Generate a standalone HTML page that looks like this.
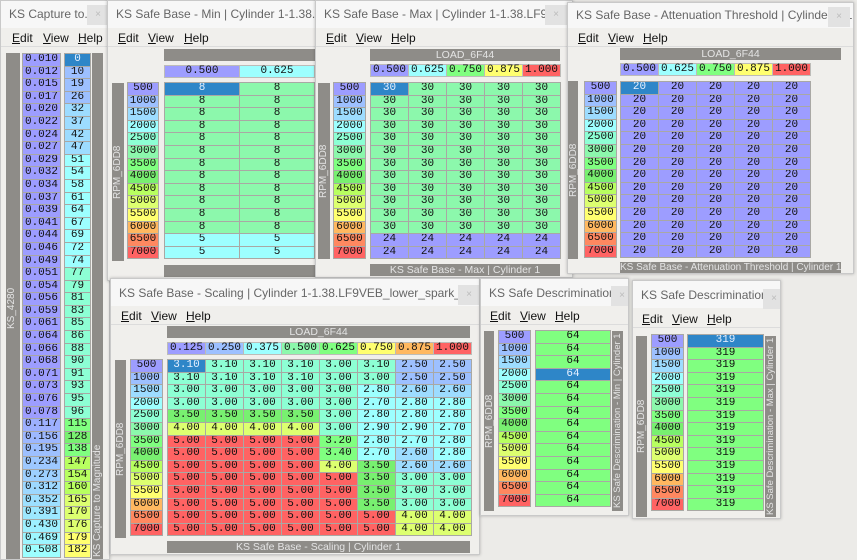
<!DOCTYPE html>
<html><head><meta charset="utf-8"><style>
*{box-sizing:border-box;margin:0;padding:0}
body{width:857px;height:556px;background:#ecebe8;position:relative;overflow:hidden;font-family:"Liberation Sans",sans-serif}
.w{position:absolute;background:#f0efec;border:1px solid #c9c9c9;overflow:hidden;box-shadow:0 0 3px rgba(0,0,0,.25)}
.t{position:absolute;left:0;top:0;right:0;height:27px;background:#f7f7f7;color:#666;font-size:12px;line-height:27px;padding-left:8px;white-space:nowrap;overflow:hidden}
.x{position:absolute;top:4px;width:22px;height:20px;background:#e2e2e2;color:#bbb;font-size:10px;text-align:center;line-height:20px}
.m{position:absolute;left:0;right:0;top:27px;height:19px;background:#f0efec;font-size:12px;color:#111;border-bottom:1px solid #dcdcdc}
.m span{position:absolute;top:3px}
.m u{text-decoration:underline}
.bar{position:absolute;height:12px;background:#8e8c88;color:#e4e4e4;font-size:10.5px;line-height:12px;text-align:center;white-space:nowrap;overflow:hidden}
.vs{position:absolute;background:#8e8c88;color:#e4e4e4;font-size:10px;writing-mode:vertical-rl;transform:rotate(180deg);text-align:center;white-space:nowrap;overflow:hidden}
.g{position:absolute;display:grid;gap:1px;background:#a9a8a4;border:1px solid #a9a8a4;font-family:"Liberation Mono",monospace;font-size:11px;color:#111}
.g div{height:11.6px;line-height:11.6px;text-align:center;overflow:hidden}
.P{background:#9d9dff}.B{background:#9dc0ff}.L{background:#9ddcff}.C{background:#9dffff}.A{background:#8dffd4}.Q{background:#8cf8ac}.G{background:#80ff80}.H{background:#78f070}.V{background:#b8ff60}.W{background:#ddff70}.Y{background:#ffff70}.O{background:#ffb860}.N{background:#ff8860}.R{background:#ff6363}.S{background:#2e86c8;color:#e6f0ff}
.ax{position:absolute;display:grid;gap:1px;font-family:"Liberation Mono",monospace;font-size:11px;color:#111;background:#bdbcb8;border:1px solid #bdbcb8}
.ax div{height:11px;line-height:11px;text-align:center}
</style></head><body>

<!-- Window 1 -->
<div class="w" style="left:0;top:0;width:110px;height:560px">
<div class="t">KS Capture to...</div><div class="x" style="left:86px">×</div>
<div class="m"><span style="left:11px"><u>E</u>dit</span><span style="left:42px"><u>V</u>iew</span><span style="left:77px"><u>H</u>elp</span></div>
<div class="vs" style="left:5px;top:52px;width:14px;height:510px">KS_4280</div>
<div class="g" style="left:21px;top:52px;grid-template-columns:37px">
<div class="P">0.010</div><div class="P">0.012</div><div class="P">0.015</div><div class="P">0.017</div><div class="P">0.020</div><div class="P">0.022</div><div class="P">0.024</div><div class="P">0.027</div><div class="P">0.029</div><div class="P">0.032</div><div class="P">0.034</div><div class="P">0.037</div><div class="P">0.039</div><div class="P">0.041</div><div class="P">0.044</div><div class="P">0.046</div><div class="P">0.049</div><div class="P">0.051</div><div class="P">0.054</div><div class="P">0.056</div><div class="P">0.059</div><div class="P">0.061</div><div class="P">0.064</div><div class="P">0.066</div><div class="P">0.068</div><div class="P">0.071</div><div class="P">0.073</div><div class="P">0.076</div><div class="P">0.078</div><div style="background:#9db0ff">0.117</div><div style="background:#9db8ff">0.156</div><div style="background:#9dc0ff">0.195</div><div style="background:#9dc8ff">0.234</div><div style="background:#9dd0ff">0.273</div><div style="background:#9dd8ff">0.312</div><div style="background:#9de0ff">0.352</div><div style="background:#9de8ff">0.391</div><div style="background:#9df0ff">0.430</div><div style="background:#9df6ff">0.469</div><div class="C">0.508</div>
</div>
<div class="g" style="left:63px;top:52px;grid-template-columns:25px">
<div class="S">0</div><div class="B">10</div><div class="B">19</div><div class="B">26</div><div class="L">32</div><div class="L">37</div><div class="L">42</div><div class="L">47</div><div class="C">51</div><div class="C">54</div><div class="C">58</div><div class="C">61</div><div class="C">64</div><div class="C">67</div><div class="C">69</div><div class="C">72</div><div class="C">74</div><div class="A">77</div><div class="A">79</div><div class="A">81</div><div class="A">83</div><div class="A">85</div><div class="A">86</div><div class="A">88</div><div class="A">90</div><div class="A">91</div><div class="A">93</div><div class="A">95</div><div class="A">96</div><div class="G">115</div><div class="H">128</div><div class="G">138</div><div class="V">147</div><div class="V">154</div><div class="V">160</div><div class="W">165</div><div class="W">170</div><div class="W">176</div><div class="Y">179</div><div class="Y">182</div>
</div>
<div class="vs" style="left:91px;top:52px;width:11px;height:510px;text-align:left;padding-top:6px">KS Capture to Magnitude</div>
</div>

<!-- Window 2 Min -->
<div class="w" style="left:107px;top:0;width:216px;height:281px">
<div class="t">KS Safe Base - Min | Cylinder 1-1.38.LF9VEB_lower</div>
<div class="m"><span style="left:10px"><u>E</u>dit</span><span style="left:40px"><u>V</u>iew</span><span style="left:76px"><u>H</u>elp</span></div>
<div class="bar" style="left:56px;top:48px;width:200px"></div>
<div class="ax" style="left:56px;top:64px;grid-template-columns:74px 74px"><div class="P">0.500</div><div class="C">0.625</div></div>
<div class="vs" style="left:4px;top:82px;width:12px;height:178px">RPM_6DD8</div>
<div class="g" style="left:19px;top:81px;grid-template-columns:30px">
<div class="P">500</div><div class="B">1000</div><div class="L">1500</div><div class="C">2000</div><div class="A">2500</div><div class="Q">3000</div><div class="G">3500</div><div class="H">4000</div><div class="V">4500</div><div class="W">5000</div><div class="Y">5500</div><div class="O">6000</div><div class="N">6500</div><div class="R">7000</div></div>
<div class="g" style="left:56px;top:81px;grid-template-columns:74px 74px">
<div class="S">8</div><div class="Q">8</div><div class="Q">8</div><div class="Q">8</div><div class="Q">8</div><div class="Q">8</div><div class="Q">8</div><div class="Q">8</div><div class="Q">8</div><div class="Q">8</div><div class="Q">8</div><div class="Q">8</div><div class="Q">8</div><div class="Q">8</div><div class="Q">8</div><div class="Q">8</div><div class="Q">8</div><div class="Q">8</div><div class="Q">8</div><div class="Q">8</div><div class="Q">8</div><div class="Q">8</div><div class="Q">8</div><div class="Q">8</div><div class="C">5</div><div class="C">5</div><div class="C">5</div><div class="C">5</div></div>
<div class="bar" style="left:56px;top:264px;width:200px;text-align:right">KS Safe</div>
</div>

<!-- Window 3 Max -->
<div class="w" style="left:315px;top:0;width:258px;height:278px">
<div class="t">KS Safe Base - Max | Cylinder 1-1.38.LF9VEB_l...</div><div class="x" style="left:229px">×</div>
<div class="m"><span style="left:10px"><u>E</u>dit</span><span style="left:40px"><u>V</u>iew</span><span style="left:75px"><u>H</u>elp</span></div>
<div class="bar" style="left:54px;top:48px;width:190px">LOAD_6F44</div>
<div class="ax" style="left:54px;top:63px;grid-template-columns:37px 37px 37px 37px 37px"><div class="P">0.500</div><div class="C">0.625</div><div class="G">0.750</div><div class="Y">0.875</div><div class="R">1.000</div></div>
<div class="vs" style="left:2px;top:82px;width:12px;height:176px">RPM_6DD8</div>
<div class="g" style="left:17px;top:81px;grid-template-columns:31px">
<div class="P">500</div><div class="B">1000</div><div class="L">1500</div><div class="C">2000</div><div class="A">2500</div><div class="Q">3000</div><div class="G">3500</div><div class="H">4000</div><div class="V">4500</div><div class="W">5000</div><div class="Y">5500</div><div class="O">6000</div><div class="N">6500</div><div class="R">7000</div></div>
<div class="g" style="left:54px;top:81px;grid-template-columns:37px 37px 37px 37px 37px">
<div class="S">30</div><div class="Q">30</div><div class="Q">30</div><div class="Q">30</div><div class="Q">30</div>
<div class="Q">30</div><div class="Q">30</div><div class="Q">30</div><div class="Q">30</div><div class="Q">30</div>
<div class="Q">30</div><div class="Q">30</div><div class="Q">30</div><div class="Q">30</div><div class="Q">30</div>
<div class="Q">30</div><div class="Q">30</div><div class="Q">30</div><div class="Q">30</div><div class="Q">30</div>
<div class="Q">30</div><div class="Q">30</div><div class="Q">30</div><div class="Q">30</div><div class="Q">30</div>
<div class="Q">30</div><div class="Q">30</div><div class="Q">30</div><div class="Q">30</div><div class="Q">30</div>
<div class="Q">30</div><div class="Q">30</div><div class="Q">30</div><div class="Q">30</div><div class="Q">30</div>
<div class="Q">30</div><div class="Q">30</div><div class="Q">30</div><div class="Q">30</div><div class="Q">30</div>
<div class="Q">30</div><div class="Q">30</div><div class="Q">30</div><div class="Q">30</div><div class="Q">30</div>
<div class="Q">30</div><div class="Q">30</div><div class="Q">30</div><div class="Q">30</div><div class="Q">30</div>
<div class="Q">30</div><div class="Q">30</div><div class="Q">30</div><div class="Q">30</div><div class="Q">30</div>
<div class="Q">30</div><div class="Q">30</div><div class="Q">30</div><div class="Q">30</div><div class="Q">30</div>
<div class="P">24</div><div class="P">24</div><div class="P">24</div><div class="P">24</div><div class="P">24</div>
<div class="P">24</div><div class="P">24</div><div class="P">24</div><div class="P">24</div><div class="P">24</div></div>
<div class="bar" style="left:54px;top:263px;width:190px">KS Safe Base - Max | Cylinder 1</div>
</div>

<!-- Window 4 Attenuation -->
<div class="w" style="left:567px;top:2px;width:287px;height:272px">
<div class="t" style="height:25px;line-height:25px">KS Safe Base - Attenuation Threshold | Cylinder 1-1....</div><div class="x" style="left:260px">×</div>
<div class="m" style="top:25px"><span style="left:10px"><u>E</u>dit</span><span style="left:40px"><u>V</u>iew</span><span style="left:75px"><u>H</u>elp</span></div>
<div class="bar" style="left:52px;top:45px;width:221px">LOAD_6F44</div>
<div class="ax" style="left:52px;top:60px;grid-template-columns:37px 37px 37px 37px 37px"><div class="P">0.500</div><div class="C">0.625</div><div class="G">0.750</div><div class="Y">0.875</div><div class="R">1.000</div></div>
<div class="vs" style="left:0;top:78px;width:10px;height:178px">RPM_6DD8</div>
<div class="g" style="left:16px;top:78px;grid-template-columns:31px">
<div class="P">500</div><div class="B">1000</div><div class="L">1500</div><div class="C">2000</div><div class="A">2500</div><div class="Q">3000</div><div class="G">3500</div><div class="H">4000</div><div class="V">4500</div><div class="W">5000</div><div class="Y">5500</div><div class="O">6000</div><div class="N">6500</div><div class="R">7000</div></div>
<div class="g" style="left:52px;top:78px;grid-template-columns:37px 37px 37px 37px 37px">
<div class="S">20</div><div class="P">20</div><div class="P">20</div><div class="P">20</div><div class="P">20</div>
<div class="P">20</div><div class="P">20</div><div class="P">20</div><div class="P">20</div><div class="P">20</div>
<div class="P">20</div><div class="P">20</div><div class="P">20</div><div class="P">20</div><div class="P">20</div>
<div class="P">20</div><div class="P">20</div><div class="P">20</div><div class="P">20</div><div class="P">20</div>
<div class="P">20</div><div class="P">20</div><div class="P">20</div><div class="P">20</div><div class="P">20</div>
<div class="P">20</div><div class="P">20</div><div class="P">20</div><div class="P">20</div><div class="P">20</div>
<div class="P">20</div><div class="P">20</div><div class="P">20</div><div class="P">20</div><div class="P">20</div>
<div class="P">20</div><div class="P">20</div><div class="P">20</div><div class="P">20</div><div class="P">20</div>
<div class="P">20</div><div class="P">20</div><div class="P">20</div><div class="P">20</div><div class="P">20</div>
<div class="P">20</div><div class="P">20</div><div class="P">20</div><div class="P">20</div><div class="P">20</div>
<div class="P">20</div><div class="P">20</div><div class="P">20</div><div class="P">20</div><div class="P">20</div>
<div class="P">20</div><div class="P">20</div><div class="P">20</div><div class="P">20</div><div class="P">20</div>
<div class="P">20</div><div class="P">20</div><div class="P">20</div><div class="P">20</div><div class="P">20</div>
<div class="P">20</div><div class="P">20</div><div class="P">20</div><div class="P">20</div><div class="P">20</div></div>
<div class="bar" style="left:52px;top:259px;width:221px;font-size:10px">KS Safe Base - Attenuation Threshold | Cylinder 1</div>
</div>

<!-- Window 5 Scaling -->
<div class="w" style="left:110px;top:278px;width:370px;height:277px">
<div class="t" style="line-height:28px">KS Safe Base - Scaling | Cylinder 1-1.38.LF9VEB_lower_spark_4000-500...</div><div class="x" style="left:347px;top:6px">×</div>
<div class="m" style="top:27px"><span style="left:10px"><u>E</u>dit</span><span style="left:40px"><u>V</u>iew</span><span style="left:75px"><u>H</u>elp</span></div>
<div class="bar" style="left:56px;top:47px;width:303px">LOAD_6F44</div>
<div class="ax" style="left:56px;top:63px;grid-template-columns:repeat(8,37px)"><div class="P">0.125</div><div class="B">0.250</div><div class="C">0.375</div><div class="Q">0.500</div><div class="G">0.625</div><div class="Y">0.750</div><div class="O">0.875</div><div class="R">1.000</div></div>
<div class="vs" style="left:4px;top:81px;width:11px;height:178px">RPM_6DD8</div>
<div class="g" style="left:19px;top:80px;grid-template-columns:31px">
<div class="P">500</div><div class="B">1000</div><div class="L">1500</div><div class="C">2000</div><div class="A">2500</div><div class="Q">3000</div><div class="G">3500</div><div class="H">4000</div><div class="V">4500</div><div class="W">5000</div><div class="Y">5500</div><div class="O">6000</div><div class="N">6500</div><div class="R">7000</div></div>
<div class="g" style="left:56px;top:80px;grid-template-columns:repeat(8,37px)">
<div class="S">3.10</div><div class="A">3.10</div><div class="A">3.10</div><div class="A">3.10</div><div class="A">3.00</div><div class="A">3.10</div><div class="B">2.50</div><div class="B">2.50</div>
<div class="A">3.10</div><div class="A">3.10</div><div class="A">3.10</div><div class="A">3.10</div><div class="A">3.00</div><div class="A">3.00</div><div class="B">2.50</div><div class="B">2.50</div>
<div class="A">3.00</div><div class="A">3.00</div><div class="A">3.00</div><div class="A">3.00</div><div class="A">3.00</div><div class="C">2.80</div><div class="L">2.60</div><div class="L">2.60</div>
<div class="A">3.00</div><div class="A">3.00</div><div class="A">3.00</div><div class="A">3.00</div><div class="A">3.00</div><div class="C">2.70</div><div class="C">2.80</div><div class="C">2.80</div>
<div class="H">3.50</div><div class="H">3.50</div><div class="H">3.50</div><div class="H">3.50</div><div class="A">3.00</div><div class="C">2.80</div><div class="C">2.80</div><div class="C">2.80</div>
<div class="W">4.00</div><div class="W">4.00</div><div class="W">4.00</div><div class="W">4.00</div><div class="A">3.00</div><div class="C">2.90</div><div class="C">2.90</div><div class="C">2.70</div>
<div class="R">5.00</div><div class="R">5.00</div><div class="R">5.00</div><div class="R">5.00</div><div class="G">3.20</div><div class="C">2.80</div><div class="C">2.70</div><div class="C">2.80</div>
<div class="R">5.00</div><div class="R">5.00</div><div class="R">5.00</div><div class="R">5.00</div><div class="G">3.40</div><div class="C">2.70</div><div class="L">2.60</div><div class="C">2.80</div>
<div class="R">5.00</div><div class="R">5.00</div><div class="R">5.00</div><div class="R">5.00</div><div class="W">4.00</div><div class="H">3.50</div><div class="L">2.60</div><div class="L">2.60</div>
<div class="R">5.00</div><div class="R">5.00</div><div class="R">5.00</div><div class="R">5.00</div><div class="R">5.00</div><div class="H">3.50</div><div class="A">3.00</div><div class="A">3.00</div>
<div class="R">5.00</div><div class="R">5.00</div><div class="R">5.00</div><div class="R">5.00</div><div class="R">5.00</div><div class="H">3.50</div><div class="A">3.00</div><div class="A">3.00</div>
<div class="R">5.00</div><div class="R">5.00</div><div class="R">5.00</div><div class="R">5.00</div><div class="R">5.00</div><div class="H">3.50</div><div class="A">3.00</div><div class="A">3.00</div>
<div class="R">5.00</div><div class="R">5.00</div><div class="R">5.00</div><div class="R">5.00</div><div class="R">5.00</div><div class="R">5.00</div><div class="W">4.00</div><div class="W">4.00</div>
<div class="R">5.00</div><div class="R">5.00</div><div class="R">5.00</div><div class="R">5.00</div><div class="R">5.00</div><div class="R">5.00</div><div class="W">4.00</div><div class="W">4.00</div></div>
<div class="bar" style="left:56px;top:262px;width:303px">KS Safe Base - Scaling | Cylinder 1</div>
</div>

<!-- Window 6 Desc Min -->
<div class="w" style="left:480px;top:278px;width:149px;height:238px">
<div class="t" style="line-height:28px">KS Safe Descrimination...</div><div class="x" style="left:130px;top:7px">×</div>
<div class="m" style="top:27px"><span style="left:9px"><u>E</u>dit</span><span style="left:39px"><u>V</u>iew</span><span style="left:74px"><u>H</u>elp</span></div>
<div class="vs" style="left:3px;top:52px;width:10px;height:180px">RPM_6DD8</div>
<div class="g" style="left:17px;top:51px;grid-template-columns:31px">
<div class="P">500</div><div class="B">1000</div><div class="L">1500</div><div class="C">2000</div><div class="A">2500</div><div class="Q">3000</div><div class="G">3500</div><div class="H">4000</div><div class="V">4500</div><div class="W">5000</div><div class="Y">5500</div><div class="O">6000</div><div class="N">6500</div><div class="R">7000</div></div>
<div class="g" style="left:54px;top:51px;grid-template-columns:74px">
<div class="G">64</div><div class="G">64</div><div class="G">64</div><div class="S">64</div><div class="G">64</div><div class="G">64</div><div class="G">64</div><div class="G">64</div><div class="G">64</div><div class="G">64</div><div class="G">64</div><div class="G">64</div><div class="G">64</div><div class="G">64</div></div>
<div class="vs" style="left:131px;top:52px;width:11px;height:180px;font-size:9.5px">KS Safe Descrimination - Min | Cylinder 1</div>
</div>

<!-- Window 7 Desc Max -->
<div class="w" style="left:632px;top:280px;width:149px;height:239px">
<div class="t" style="line-height:28px">KS Safe Descrimination...</div><div class="x" style="left:130px;top:8px">×</div>
<div class="m" style="top:28px"><span style="left:9px"><u>E</u>dit</span><span style="left:39px"><u>V</u>iew</span><span style="left:74px"><u>H</u>elp</span></div>
<div class="vs" style="left:3px;top:55px;width:11px;height:181px">RPM_6DD8</div>
<div class="g" style="left:18px;top:53px;grid-template-columns:31px">
<div class="P">500</div><div class="B">1000</div><div class="L">1500</div><div class="C">2000</div><div class="A">2500</div><div class="Q">3000</div><div class="G">3500</div><div class="H">4000</div><div class="V">4500</div><div class="W">5000</div><div class="Y">5500</div><div class="O">6000</div><div class="N">6500</div><div class="R">7000</div></div>
<div class="g" style="left:54px;top:53px;grid-template-columns:75px">
<div class="S">319</div><div class="G">319</div><div class="G">319</div><div class="G">319</div><div class="G">319</div><div class="G">319</div><div class="G">319</div><div class="G">319</div><div class="G">319</div><div class="G">319</div><div class="G">319</div><div class="G">319</div><div class="G">319</div><div class="G">319</div></div>
<div class="vs" style="left:132px;top:55px;width:11px;height:181px;font-size:9.5px">KS Safe Descrimination - Max | Cylinder 1</div>
</div>

</body></html>
